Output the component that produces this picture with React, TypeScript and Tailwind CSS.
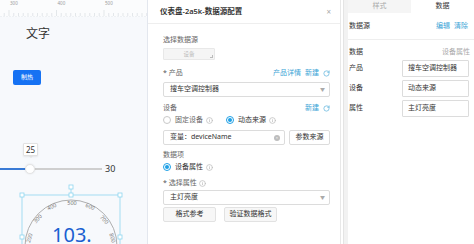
import React from 'react';
import { Info, RotateCw } from 'lucide-react';

const Radio = ({ checked }: { checked?: boolean }) =>
  checked ? (
    <span className="w-[8px] h-[8px] rounded-full border border-[#1ea0e6] flex items-center justify-center shrink-0">
      <span className="w-[4px] h-[4px] rounded-full bg-[#1ea0e6]" />
    </span>
  ) : (
    <span className="w-[8px] h-[8px] rounded-full border border-[#c8c8c8] shrink-0" />
  );

const Tip = () => <Info className="w-[7px] h-[7px] text-[#bbb] shrink-0" strokeWidth={2.5} />;

const Ruler = () => {
  const ticks = [];
  for (let i = 0; i < 32; i++) {
    const x = 9 + i * 4.75 - 4.75 * 2;
    const major = i % 10 === 2;
    ticks.push(
      <line key={i} x1={x} x2={x} y1={major ? 10 : 13} y2={16} stroke="#d4d8de" strokeWidth={0.6} />
    );
  }
  return (
    <svg width="148" height="17" className="absolute left-0 top-0">
      <rect width="148" height="17" fill="#fbfcfd" />
      {ticks}
      <line x1="0" x2="148" y1="16.5" y2="16.5" stroke="#e6e9ee" strokeWidth={0.6} strokeDasharray="2 1" />
      {[['300', 10], ['400', 57.5], ['500', 105]].map(([t, x]) => (
        <text key={t as string} x={x as number} y="5" fontSize="4.5" fill="#999" fontFamily="Noto Sans, sans-serif">
          {t}
        </text>
      ))}
    </svg>
  );
};

const Gauge = () => {
  const labels: [string, number, number, number][] = [
    ['200', 30, 58, -74],
    ['300', 38, 39, -48],
    ['400', 52, 27, -24],
    ['500', 72, 24, 0],
    ['600', 90, 27, 24],
    ['700', 104, 40, 48],
    ['800', 112, 58, 74],
  ];
  const handles: [number, number][] = [
    [22, 15],
    [71, 15],
    [120, 15],
    [22, 57],
    [120, 57],
    [71, 7],
  ];
  return (
    <svg width="148" height="64" className="absolute left-0 top-[180px]">
      <circle cx="71" cy="66" r="46" fill="none" stroke="#9a9a9a" strokeWidth={0.8} />
      {labels.map(([t, x, y, r]) => (
        <text
          key={t}
          x={x}
          y={y}
          fontSize="5.5"
          fill="#777"
          textAnchor="middle"
          dominantBaseline="middle"
          fontFamily="Noto Sans, sans-serif"
          transform={`rotate(${r} ${x} ${y})`}
        >
          {t}
        </text>
      ))}
      <rect x="22" y="15" width="98" height="84" fill="none" stroke="#8fd6f0" strokeWidth={0.8} />
      <line x1="71" x2="71" y1="7" y2="15" stroke="#8fd6f0" strokeWidth={0.8} />
      {handles.map(([x, y], i) => (
        <rect key={i} x={x - 2} y={y - 2} width="4" height="4" fill="#fff" stroke="#8fd6f0" strokeWidth={0.8} />
      ))}
    </svg>
  );
};

const Canvas = () => (
  <div className="relative w-[148px] h-full bg-[#f7f9fc] border-r border-[#e3e7ee] overflow-hidden shrink-0">
    <Ruler />
    <div className="absolute left-[26px] top-[24px] text-[12px] leading-[20px] text-[#333]">文字</div>
    <div className="absolute left-[13px] top-[70px] w-[28px] h-[15px] rounded-[2px] bg-[#1672f3] text-white text-[6px] flex items-center justify-center">
      制热
    </div>
    <div className="absolute left-[23px] top-[143px] w-[15px] h-[13px] bg-white border border-[#e2e2e2] rounded-[1px] shadow-[0_1px_2px_rgba(0,0,0,0.08)] text-[8px] leading-none text-[#333] flex items-center justify-center">
      25
    </div>
    <div className="absolute left-[28px] top-[155px] w-0 h-0 border-l-[3px] border-r-[3px] border-t-[3px] border-l-transparent border-r-transparent border-t-[#e2e2e2]" />
    <div className="absolute left-0 top-[168px] w-[27px] h-[2px] bg-[#3a7bd5]" />
    <div className="absolute left-[34px] top-[168px] w-[68px] h-[2px] bg-[#cfcfcf]" />
    <div className="absolute left-[25px] top-[164px] w-[10px] h-[10px] rounded-full bg-white border border-[#e4e4e4] shadow-[0_0_2px_rgba(0,0,0,0.1)]" />
    <div className="absolute left-[105px] top-[163px] text-[9px] leading-[12px] text-[#333]">30</div>
    <Gauge />
    <div className="absolute left-[52px] top-[225px] text-[20px] leading-none text-[#1a5fd1] font-normal">103.</div>
  </div>
);

const Modal = () => (
  <div className="w-[192px] h-full bg-white flex flex-col shrink-0 text-[7px] text-[#666]">
    <div className="h-[24px] border-b border-[#eee] flex items-center justify-between pl-[12px] pr-[9px]">
      <span className="text-[7.5px] font-semibold text-[#333]">仪表盘-2a5k-数据源配置</span>
      <span className="text-[8px] text-[#aaa]">×</span>
    </div>
    <div className="flex flex-col pl-[15px] pr-[10px] pt-[10px]">
      <div className="h-[12px] flex items-center">选择数据源</div>
      <div className="relative mt-[2px] w-[52px] h-[12px] bg-[#f5f5f5] border border-[#e8e8e8] rounded-[1px] flex items-center justify-center text-[5.5px] text-[#bbb]">
        设备
        <span className="absolute right-[1px] bottom-[1px] w-[3px] h-[3px] border-r border-b border-[#bbb]" />
      </div>
      <div className="mt-[7px] h-[12px] flex items-center justify-between">
        <span>
          <span className="text-[#555]">* </span>产品
        </span>
        <span className="flex items-center gap-[4px] text-[#3aa4d6]">
          <span>产品详情</span>
          <span>新建</span>
          <RotateCw className="w-[7px] h-[7px]" strokeWidth={2} />
        </span>
      </div>
      <div className="mt-[3px] h-[15px] border border-[#dcdcdc] rounded-[2px] flex items-center justify-between pl-[6px] pr-[4px] text-[#333]">
        <span>搜车空调控制器</span>
        <span className="text-[5px] text-[#aaa]">▼</span>
      </div>
      <div className="mt-[6px] h-[11px] flex items-center justify-between">
        <span>设备</span>
        <span className="flex items-center gap-[4px] text-[#3aa4d6]">
          <span>新建</span>
          <RotateCw className="w-[7px] h-[7px]" strokeWidth={2} />
        </span>
      </div>
      <div className="h-[12px] flex items-center gap-[3px]">
        <Radio />
        <span className="ml-[1px]">固定设备</span>
        <Tip />
        <span className="w-[7px]" />
        <Radio checked />
        <span className="ml-[1px] text-[#333]">动态来源</span>
        <Tip />
      </div>
      <div className="mt-[4px] h-[15px] flex gap-[4px]">
        <div className="flex-1 border border-[#dcdcdc] rounded-[2px] flex items-center justify-between pl-[6px] pr-[4px] text-[#333]">
          <span>变量：deviceName</span>
          <span className="w-[6px] h-[6px] rounded-full bg-[#bdbdbd] flex items-center justify-center text-white text-[4px] leading-none">×</span>
        </div>
        <div className="w-[41px] border border-[#dcdcdc] rounded-[2px] flex items-center justify-center text-[#333]">参数来源</div>
      </div>
      <div className="mt-[4px] h-[12px] flex items-center">数据项</div>
      <div className="h-[12px] flex items-center gap-[3px]">
        <Radio checked />
        <span className="ml-[1px] text-[#333]">设备属性</span>
        <Tip />
      </div>
      <div className="mt-[4px] h-[12px] flex items-center gap-[2px]">
        <span>
          <span className="text-[#555]">* </span>选择属性
        </span>
        <Tip />
      </div>
      <div className="mt-[1px] h-[15px] border border-[#dcdcdc] rounded-[2px] flex items-center justify-between pl-[6px] pr-[4px] text-[#333]">
        <span>主灯亮度</span>
        <span className="text-[5px] text-[#aaa]">▼</span>
      </div>
      <div className="mt-[2px] flex gap-[8px]">
        <div className="w-[53px] h-[15px] border border-[#e2e2e2] bg-[#f7f7f7] rounded-[2px] flex items-center justify-center text-[#333]">格式参考</div>
        <div className="w-[53px] h-[15px] border border-[#e2e2e2] bg-[#f7f7f7] rounded-[2px] flex items-center justify-center text-[#333]">验证数据格式</div>
      </div>
    </div>
  </div>
);

const Field = ({ label, value }: { label: string; value: string }) => (
  <div className="h-[17px] flex items-center">
    <span className="w-[53px] text-[#333]">{label}</span>
    <div className="w-[67px] h-[17px] border border-[#dcdcdc] rounded-[1px] flex items-center pl-[5px] text-[#333]">{value}</div>
  </div>
);

const Panel = () => (
  <div className="flex-1 h-full bg-white border-l border-[#e8e8e8] flex text-[7px]">
    <div className="w-[2px]" />
    <div className="w-[5px] h-full bg-[#f2f2f2] border-l border-[#e4e4e4]" />
    <div className="flex-1 flex flex-col">
      <div className="h-[13px] flex">
        <div className="w-[63px] bg-[#f5f5f5] flex items-center justify-center text-[#aaa]">样式</div>
        <div className="flex-1 flex items-center justify-center text-[#333]">数据</div>
      </div>
      <div className="h-[27px] border-b border-[#eee] flex items-center justify-between pl-[1px] pr-[6px]">
        <span className="text-[#333]">数据源</span>
        <span className="flex gap-[4px] text-[#3aa4d6]">
          <span>编辑</span>
          <span>清除</span>
        </span>
      </div>
      <div className="mt-[4px] h-[16px] flex items-center justify-between pl-[1px] pr-[4px]">
        <span className="text-[#333]">数据</span>
        <span className="text-[#aaa]">设备属性</span>
      </div>
      <div className="flex flex-col gap-[3px] pl-[1px]">
        <Field label="产品" value="搜车空调控制器" />
        <Field label="设备" value="动态来源" />
        <Field label="属性" value="主灯亮度" />
      </div>
    </div>
  </div>
);

export default function App() {
  return (
    <div className="w-[474px] h-[244px] flex overflow-hidden bg-white font-[Noto_Sans,Noto_Sans_CJK_SC,sans-serif]">
      <Canvas />
      <Modal />
      <Panel />
    </div>
  );
}
